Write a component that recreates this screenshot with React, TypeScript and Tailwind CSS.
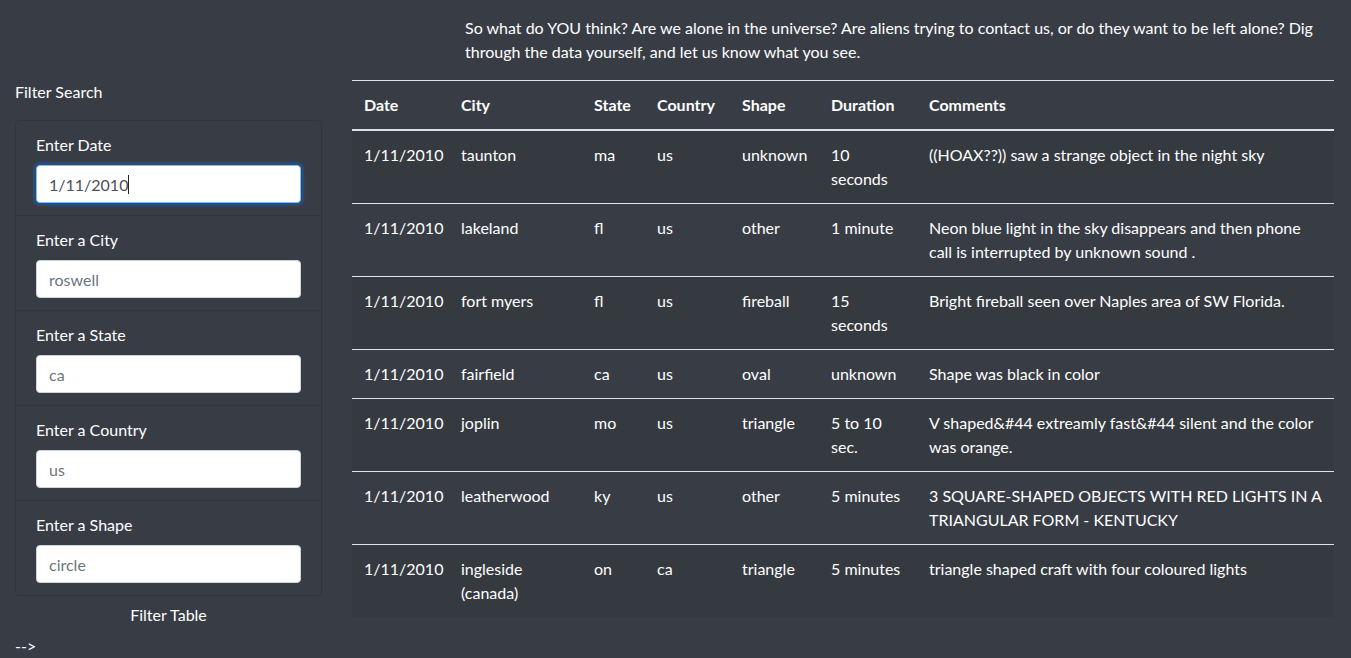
import React from "react";

const rows = [
  ["1/11/2010", "taunton", "ma", "us", "unknown", "10 seconds", "((HOAX??)) saw a strange object in the night sky"],
  ["1/11/2010", "lakeland", "fl", "us", "other", "1 minute", "Neon blue light in the sky disappears and then phone call is interrupted by unknown sound ."],
  ["1/11/2010", "fort myers", "fl", "us", "fireball", "15 seconds", "Bright fireball seen over Naples area of SW Florida."],
  ["1/11/2010", "fairfield", "ca", "us", "oval", "unknown", "Shape was black in color"],
  ["1/11/2010", "joplin", "mo", "us", "triangle", "5 to 10 sec.", "V shaped&#44 extreamly fast&#44 silent and the color was orange."],
  ["1/11/2010", "leatherwood", "ky", "us", "other", "5 minutes", "3 SQUARE-SHAPED OBJECTS WITH RED LIGHTS IN A TRIANGULAR FORM - KENTUCKY"],
  ["1/11/2010", "ingleside (canada)", "on", "ca", "triangle", "5 minutes", "triangle shaped craft with four coloured lights"],
];

const filters = [
  { label: "Enter a City", placeholder: "roswell" },
  { label: "Enter a State", placeholder: "ca" },
  { label: "Enter a Country", placeholder: "us" },
  { label: "Enter a Shape", placeholder: "circle" },
];

export default function App() {
  return (
    <div className="bg-[#383d45] text-white font-['Lato',sans-serif] text-base leading-6 pt-4 px-[15px] pr-[17px]">
      <p className="ml-[450px] mb-4">
        So what do YOU think? Are we alone in the universe? Are aliens trying to contact us, or do they want to be left alone? Dig through the data yourself, and let us know what you see.
      </p>
      <div className="grid grid-cols-[307px_1fr] gap-[30px]">
        <div>
          <div className="mb-4">Filter Search</div>
          <ul className="border border-[#31353c] rounded">
            <li className="px-5 py-3 border-b border-[#31353c]">
              <label className="block mb-2" htmlFor="datetime">Enter Date</label>
              <div className="relative">
                <input
                  id="datetime"
                  type="text"
                  defaultValue="1/11/2010"
                  className="block w-full h-[38px] px-3 bg-white text-[#495057] border border-[#80bdff] rounded outline-none shadow-[0_0_0_3.2px_rgba(0,123,255,0.25)]"
                />
                <span className="absolute left-[13px] top-[9px] pointer-events-none flex items-center h-5">
                  <span className="invisible">1/11/2010</span>
                  <span className="inline-block w-px h-[19px] bg-[#222]"></span>
                </span>
              </div>
            </li>
            {filters.map((f, i) => (
              <li key={f.label} className={"px-5 py-3 " + (i < filters.length - 1 ? "border-b border-[#31353c]" : "")}>
                <label className="block mb-2">{f.label}</label>
                <input
                  type="text"
                  placeholder={f.placeholder}
                  className="block w-full h-[38px] px-3 bg-white text-[#495057] placeholder:text-[#6c757d] border border-[#ced4da] rounded outline-none"
                />
              </li>
            ))}
          </ul>
          <div className="flex justify-center">
            <button className="h-[38px] px-3 text-white">Filter Table</button>
          </div>
          <div>--&gt;</div>
        </div>
        <div>
          <table className="w-full table-fixed border-collapse text-left">
            <thead>
              <tr>
                <th className="w-[97px] p-3 font-bold border-t border-b-2 border-[#dee2e6]">Date</th>
                <th className="w-[133px] p-3 font-bold border-t border-b-2 border-[#dee2e6]">City</th>
                <th className="w-[63px] p-3 font-bold border-t border-b-2 border-[#dee2e6]">State</th>
                <th className="w-[85px] p-3 font-bold border-t border-b-2 border-[#dee2e6]">Country</th>
                <th className="w-[89px] p-3 font-bold border-t border-b-2 border-[#dee2e6]">Shape</th>
                <th className="w-[98px] p-3 font-bold border-t border-b-2 border-[#dee2e6]">Duration</th>
                <th className="p-3 font-bold border-t border-b-2 border-[#dee2e6]">Comments</th>
              </tr>
            </thead>
            <tbody>
              {rows.map((r, i) => (
                <tr key={i} className={i % 2 === 0 ? "bg-[#353a41]" : ""}>
                  {r.map((c, j) => (
                    <td key={j} className="p-3 align-top border-t border-[#dee2e6]">{c}</td>
                  ))}
                </tr>
              ))}
            </tbody>
          </table>
        </div>
      </div>
    </div>
  );
}
